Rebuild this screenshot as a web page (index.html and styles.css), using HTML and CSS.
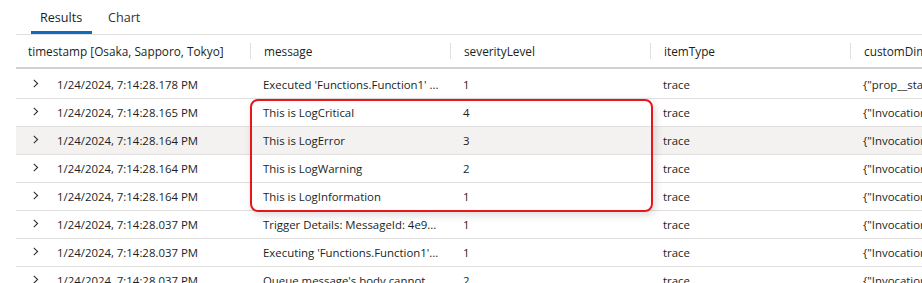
FILE: index.html
```html
<!DOCTYPE html>
<html>
<head>
<meta charset="utf-8">
<link rel="stylesheet" href="styles.css">
</head>
<body>
<div class="tabs">
  <div class="tab active">Results</div>
  <div class="tab">Chart</div>
</div>
<div class="grid">
  <div class="row head">
    <div class="cell c1">timestamp [Osaka, Sapporo, Tokyo]</div>
    <div class="cell sep">message</div>
    <div class="cell sep">severityLevel</div>
    <div class="cell sep">itemType</div>
    <div class="cell sep last">customDimensions</div>
  </div>
  <div class="body">
    <div class="row"><div class="cell c1"><svg class="chev" width="6" height="9" viewBox="0 0 6 9"><polyline points="0.8,0.8 4.6,4.5 0.8,8.2" fill="none" stroke="#323130" stroke-width="1.1"/></svg>1/24/2024, 7:14:28.178 PM</div><div class="cell">Executed 'Functions.Function1' ...</div><div class="cell">1</div><div class="cell">trace</div><div class="cell last">{"prop__status":"Succeeded"}</div></div>
    <div class="row"><div class="cell c1"><svg class="chev" width="6" height="9" viewBox="0 0 6 9"><polyline points="0.8,0.8 4.6,4.5 0.8,8.2" fill="none" stroke="#323130" stroke-width="1.1"/></svg>1/24/2024, 7:14:28.165 PM</div><div class="cell">This is LogCritical</div><div class="cell">4</div><div class="cell">trace</div><div class="cell last">{"InvocationId":"a1"}</div></div>
    <div class="row hover"><div class="cell c1"><svg class="chev" width="6" height="9" viewBox="0 0 6 9"><polyline points="0.8,0.8 4.6,4.5 0.8,8.2" fill="none" stroke="#323130" stroke-width="1.1"/></svg>1/24/2024, 7:14:28.164 PM</div><div class="cell">This is LogError</div><div class="cell">3</div><div class="cell">trace</div><div class="cell last">{"InvocationId":"a1"}</div></div>
    <div class="row"><div class="cell c1"><svg class="chev" width="6" height="9" viewBox="0 0 6 9"><polyline points="0.8,0.8 4.6,4.5 0.8,8.2" fill="none" stroke="#323130" stroke-width="1.1"/></svg>1/24/2024, 7:14:28.164 PM</div><div class="cell">This is LogWarning</div><div class="cell">2</div><div class="cell">trace</div><div class="cell last">{"InvocationId":"a1"}</div></div>
    <div class="row"><div class="cell c1"><svg class="chev" width="6" height="9" viewBox="0 0 6 9"><polyline points="0.8,0.8 4.6,4.5 0.8,8.2" fill="none" stroke="#323130" stroke-width="1.1"/></svg>1/24/2024, 7:14:28.164 PM</div><div class="cell">This is LogInformation</div><div class="cell">1</div><div class="cell">trace</div><div class="cell last">{"InvocationId":"a1"}</div></div>
    <div class="row"><div class="cell c1"><svg class="chev" width="6" height="9" viewBox="0 0 6 9"><polyline points="0.8,0.8 4.6,4.5 0.8,8.2" fill="none" stroke="#323130" stroke-width="1.1"/></svg>1/24/2024, 7:14:28.037 PM</div><div class="cell">Trigger Details: MessageId: 4e9...</div><div class="cell">1</div><div class="cell">trace</div><div class="cell last">{"InvocationId":"a1"}</div></div>
    <div class="row"><div class="cell c1"><svg class="chev" width="6" height="9" viewBox="0 0 6 9"><polyline points="0.8,0.8 4.6,4.5 0.8,8.2" fill="none" stroke="#323130" stroke-width="1.1"/></svg>1/24/2024, 7:14:28.037 PM</div><div class="cell">Executing 'Functions.Function1'...</div><div class="cell">1</div><div class="cell">trace</div><div class="cell last">{"InvocationId":"a1"}</div></div>
    <div class="row"><div class="cell c1"><svg class="chev" width="6" height="9" viewBox="0 0 6 9"><polyline points="0.8,0.8 4.6,4.5 0.8,8.2" fill="none" stroke="#323130" stroke-width="1.1"/></svg>1/24/2024, 7:14:28.037 PM</div><div class="cell">Queue message's body cannot ...</div><div class="cell">2</div><div class="cell">trace</div><div class="cell last">{"InvocationId":"a1"}</div></div>
    <div class="highlight"></div>
  </div>
</div>
</body>
</html>
```
FILE: styles.css
```css
* { box-sizing: border-box; }
html, body { margin: 0; padding: 0; background: #fff; overflow: hidden; }
body {
  font-family: "Open Sans", "Noto Sans", sans-serif;
  font-size: 11.4px;
  color: #201f1e;
  width: 922px;
  height: 283px;
}
.tabs {
  display: flex;
  margin-left: 16px;
  height: 35px;
  border-bottom: 1px solid #e1dfdd;
  padding-left: 15px;
}
.tab {
  font-size: 12.6px;
  padding: 9px 9px 0;
  margin-right: 7px;
  height: 34px;
  color: #323130;
}
.tab.active {
  color: #201f1e;
  border-bottom: 3px solid #0f6cbd;
  padding-left: 9px;
  padding-right: 9px;
  width: 61px;
}
.grid {
  margin-left: 16px;
  position: relative;
}
.row {
  display: grid;
  grid-template-columns: 234px 200px 200px 200px 1fr;
  height: 28px;
  border-bottom: 1px solid #e1dfdd;
  align-items: center;
}
.row.head {
  height: 34px;
  border-bottom: 2px solid #d2d0ce;
  margin-bottom: 2px;
  font-size: 11.8px;
}
.row.hover { background: #f3f2f1; }
.cell {
  white-space: nowrap;
  overflow: hidden;
  padding-left: 13px;
  line-height: 27px;
  display: flex;
  align-items: center;
}
.head .cell { line-height: 16px; }
.head .c1 { padding-left: 12px; }
.head .sep { border-left: 1px solid #e1dfdd; }
.c1 { padding-left: 17px; }
.chev {
  display: block;
  width: 6px;
  height: 9px;
  margin-right: 18px;
  margin-top: -2px;
}
.body { position: relative; }
.highlight {
  position: absolute;
  left: 234px;
  top: 28px;
  width: 403px;
  height: 113px;
  border: 2px solid #e8161b;
  border-radius: 8px;
  box-shadow: 2px 3px 8px rgba(0,0,0,0.14);
  pointer-events: none;
}
```
